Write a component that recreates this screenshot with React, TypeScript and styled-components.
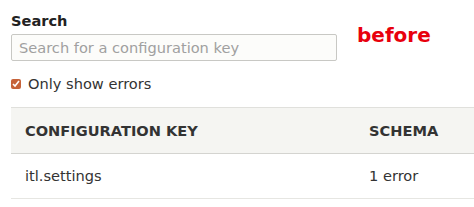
import React, { useState } from 'react'
import styled, { createGlobalStyle } from 'styled-components'

const GlobalStyle = createGlobalStyle`
  body {
    margin: 0;
    background: #fff;
    font-family: "DejaVu Sans", sans-serif;
    color: #333;
    overflow: hidden;
  }
`

const Page = styled.div`
  padding: 11px 0 0 11px;
  overflow: hidden;
`

const TopRow = styled.div`
  display: flex;
  align-items: flex-start;
  gap: 20px;
`

const SearchGroup = styled.div`
  display: flex;
  flex-direction: column;
  gap: 4px;
`

const Label = styled.label`
  font-weight: bold;
  font-size: 14.6px;
  line-height: 19px;
  color: #222;
`

const SearchInput = styled.input`
  box-sizing: border-box;
  width: 326px;
  height: 27px;
  padding: 0 7px;
  border: 1px solid #c8c8c4;
  border-radius: 2px;
  background: #fcfcfa;
  font-family: inherit;
  font-size: 14.6px;
  color: #333;

  &::placeholder {
    color: #a0a0a0;
  }
`

const Marker = styled.span`
  margin-top: 12px;
  font-weight: bold;
  font-size: 20px;
  line-height: 24px;
  color: #e8000d;
`

const CheckRow = styled.label`
  display: flex;
  align-items: center;
  gap: 7px;
  margin-top: 14px;
  font-size: 14.6px;
  line-height: 18px;
  color: #333;
`

const Check = styled.input`
  margin: 0;
  width: 10px;
  height: 10px;
  accent-color: #c6633a;
`

const Table = styled.table`
  margin-top: 14px;
  width: 600px;
  border-collapse: collapse;
  font-size: 14.6px;
`

const HeadCell = styled.th<{ $width?: number }>`
  width: ${p => (p.$width ? `${p.$width}px` : 'auto')};
  background: #f5f5f2;
  border-top: 1px solid #e0e0dc;
  border-bottom: 1px solid #d4d4d0;
  padding: 14px 14px;
  line-height: 17px;
  text-align: left;
  text-transform: uppercase;
  font-size: 14.6px;
  color: #333;
`

const Cell = styled.td`
  padding: 13px 14px 14px;
  line-height: 17px;
  border-bottom: 1px solid #e6e6e2;
  color: #333;
`

const rows = [{ key: 'itl.settings', schema: '1 error' }]

export default function App() {
  const [onlyErrors, setOnlyErrors] = useState(true)

  return (
    <Page>
      <GlobalStyle />
      <TopRow>
        <SearchGroup>
          <Label>Search</Label>
          <SearchInput placeholder="Search for a configuration key" />
        </SearchGroup>
        <Marker>before</Marker>
      </TopRow>
      <CheckRow>
        <Check type="checkbox" checked={onlyErrors} onChange={() => setOnlyErrors(!onlyErrors)} />
        Only show errors
      </CheckRow>
      <Table>
        <thead>
          <tr>
            <HeadCell $width={316}>Configuration key</HeadCell>
            <HeadCell>Schema</HeadCell>
          </tr>
        </thead>
        <tbody>
          {rows.map(r => (
            <tr key={r.key}>
              <Cell>{r.key}</Cell>
              <Cell>{r.schema}</Cell>
            </tr>
          ))}
        </tbody>
      </Table>
    </Page>
  )
}
